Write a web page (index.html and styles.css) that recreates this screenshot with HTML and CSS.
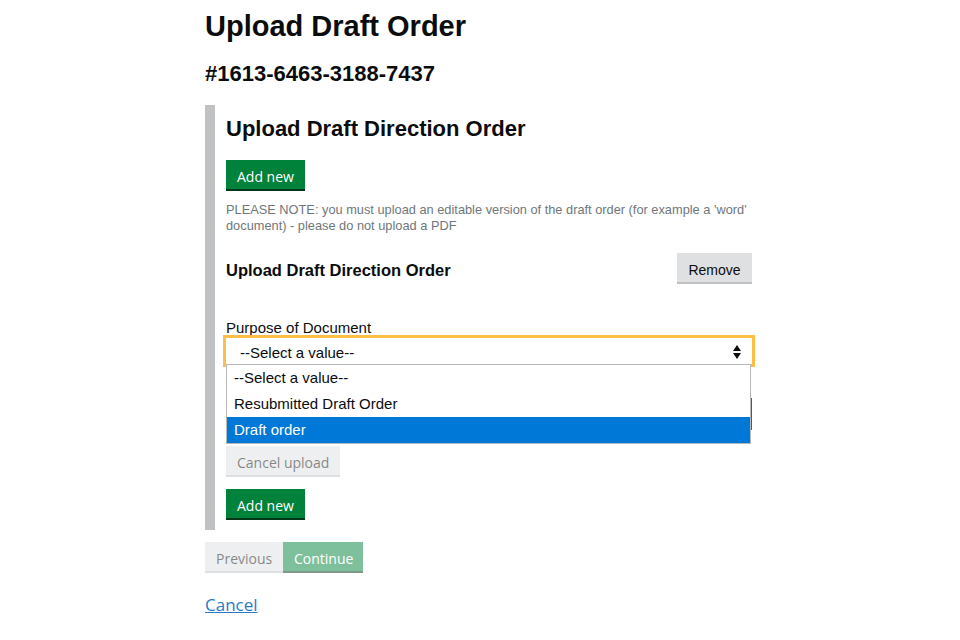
FILE: index.html
```html
<!DOCTYPE html>
<html>
<head>
    <title>Upload Draft Order</title>
    <link rel="stylesheet" href="styles.css">
</head>
<body>
    <div class="page">
        <h1>Upload Draft Order</h1>
        <h2 class="case-ref">#1613-6463-3188-7437</h2>

        <!-- collection of uploaded orders -->
        <div class="collection">
            <h2 class="collection-title">Upload Draft Direction Order</h2>
            <button class="btn btn-green">Add new</button>
            <p class="hint">PLEASE NOTE: you must upload an editable version of the draft order (for example a 'word' document) - please do not upload a PDF</p>

            <div class="item">
                <div class="item-head">
                    <h3>Upload Draft Direction Order</h3>
                    <button class="btn btn-grey btn-remove">Remove</button>
                </div>

                <label class="field-label">Purpose of Document</label>
                <div class="select-wrap">
                    <div class="select">
                        <span>--Select a value--</span>
                        <svg class="arrows" width="8" height="14" viewBox="0 0 8 14">
                            <path d="M4 0 L8 6 L0 6 Z" fill="#0b0c0c"/>
                            <path d="M0 8 L8 8 L4 14 Z" fill="#0b0c0c"/>
                        </svg>
                    </div>
                    <ul class="options">
                        <li>--Select a value--</li>
                        <li>Resubmitted Draft Order</li>
                        <li class="active">Draft order</li>
                    </ul>
                </div>

                <div class="file-box"></div>
                <button class="btn btn-grey" disabled>Cancel upload</button>
            </div>

            <button class="btn btn-green">Add new</button>
        </div>

        <div class="form-nav">
            <button class="btn btn-grey" disabled>Previous</button>
            <button class="btn btn-green" disabled>Continue</button>
        </div>

        <a class="cancel-link" href="#">Cancel</a>
    </div>
</body>
</html>
```

FILE: styles.css
```css
body {
    margin: 0;
    padding: 0;
    font-family: "Liberation Sans", Arial, sans-serif;
    color: #0b0c0c;
    background-color: white;
}
.page {
    width: 550px;
    margin: 0 auto;
    padding-top: 9px;
}
h1 {
    margin: 0;
    font-size: 29px;
    line-height: 34px;
    font-weight: bold;
}
.case-ref {
    margin: 18px 0 0;
    font-size: 22px;
    line-height: 26px;
}
.collection {
    margin-top: 18px;
    padding: 11px 3px 12px 11px;
    border-left: 10px solid #bfc1c3;
}
.collection-title {
    margin: 0 0 18px;
    font-size: 22px;
    line-height: 26px;
}
.btn {
    display: block;
    height: 29px;
    padding: 4px 11px 0;
    border: none;
    border-radius: 0;
    font-family: "Open Sans", sans-serif;
    font-size: 14px;
    cursor: pointer;
}
.btn-green {
    background-color: #00823b;
    color: white;
    box-shadow: 0 2px 0 #003618;
}
.btn-grey {
    background-color: #dee0e2;
    color: #0b0c0c;
    box-shadow: 0 2px 0 #bfc1c3;
}
.btn[disabled] {
    opacity: 0.5;
    cursor: default;
}
.hint {
    margin: 13px 0 0;
    font-size: 12.8px;
    line-height: 16px;
    color: #6f777b;
}
.item {
    margin-top: 19px;
}
.item-head {
    display: flex;
    justify-content: space-between;
    align-items: center;
}
.item-head h3 {
    margin: 4px 0 0;
    font-size: 16.5px;
    line-height: 20px;
}
.btn-remove {
    font-family: "Liberation Sans", Arial, sans-serif;
    font-size: 14px;
    width: 75px;
}
.field-label {
    display: block;
    margin-top: 38px;
    font-size: 15px;
    line-height: 15px;
}
.select-wrap {
    position: relative;
    margin-top: 3px;
}
.select {
    display: flex;
    justify-content: space-between;
    align-items: center;
    height: 24px;
    padding: 2px 11px 0 14px;
    outline: 3px solid #ffbf47;
    font-size: 15px;
    background-color: white;
}
.arrows {
    display: block;
}
/* open dropdown list, drawn over the upload box */
.options {
    position: absolute;
    top: 100%;
    left: 0;
    right: 1px;
    margin: 0;
    padding: 0;
    list-style: none;
    background-color: white;
    border: 1px solid #b8b8b8;
    z-index: 2;
}
.options li {
    height: 26px;
    line-height: 26px;
    padding-left: 7px;
    font-size: 15px;
}
.options li.active {
    background-color: #0078d7;
    color: white;
}
.file-box {
    margin-top: 34px;
    height: 28px;
    border: 2px solid #505a5f;
}
.item .btn-grey[disabled] {
    margin-top: 16px;
}
.item + .btn {
    margin-top: 14px;
}
.form-nav {
    display: flex;
    margin-top: 12px;
}
.form-nav .btn:first-child {
    width: 78px;
}
.form-nav .btn:last-child {
    width: 80px;
}
.cancel-link {
    display: inline-block;
    margin-top: 24px;
    font-family: "Open Sans", sans-serif;
    font-size: 17px;
    line-height: 20px;
    color: #2b7bc4;
    text-decoration: underline;
}
```
